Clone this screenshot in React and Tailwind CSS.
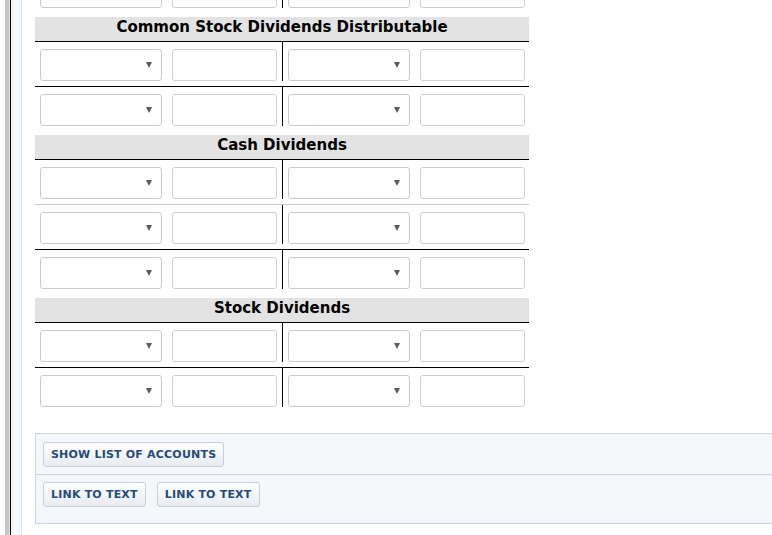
import React from 'react';

const font = { fontFamily: '"DejaVu Sans", Verdana, sans-serif' };

function Select() {
  return (
    <div className="relative w-[122px] h-[32px] bg-white border border-[#cbcbcb] rounded-[3px] shrink-0">
      <svg className="absolute right-[9px] top-[12px]" width="6" height="6" viewBox="0 0 6 6">
        <path d="M0 0 H6 L3 6 Z" fill="#5a5a5a" />
      </svg>
    </div>
  );
}

function Input() {
  return <div className="w-[105px] h-[32px] bg-white border border-[#cfcfcf] rounded-[3px] shrink-0" />;
}

// one journal line: two halves split by the black rule
function Row({ last, line = 'black' }) {
  const bottom = last
    ? 'pb-[9px]'
    : line === 'gray'
    ? 'pb-[5px] border-b border-[#c8c8c8]'
    : 'pb-[5px] border-b border-black';
  return (
    <div className={`flex ${bottom}`}>
      <div className="flex w-[248px] pt-[7px] pl-[5px] border-r border-black">
        <Select />
        <div className="w-[10px]" />
        <Input />
      </div>
      <div className="flex w-[246px] pt-[7px] pl-[5px]">
        <Select />
        <div className="w-[10px]" />
        <Input />
      </div>
    </div>
  );
}

function Header({ title }) {
  return (
    <div className="h-[25px] pt-[3px] bg-[#e3e3e3] border-b border-black text-center text-[15px] font-bold text-black leading-[15px]">
      {title}
    </div>
  );
}

function Button({ children }) {
  return (
    <button className="h-[25px] px-[7px] border border-[#c5ced9] rounded-[3px] bg-gradient-to-b from-white to-[#e7ecf1] text-[11px] font-bold uppercase tracking-[0.2px] text-[#264b77] leading-none">
      {children}
    </button>
  );
}

export default function App() {
  return (
    <div className="flex min-h-[535px] bg-white overflow-hidden" style={font}>
      {/* frame on the left */}
      <div className="w-[5px] shrink-0" />
      <div className="w-[4px] bg-[#c6c6c6] shrink-0" />
      <div className="w-[1px] bg-[#e4e4e4] shrink-0" />
      <div className="w-[1px] bg-black shrink-0" />
      <div className="w-[10px] bg-[#f5f8fb] shrink-0" />
      <div className="w-[1px] bg-[#d8e0e9] shrink-0" />

      <div className="flex-1 pl-[13px]">
        <div className="w-[494px] -mt-[31px]">
          <Row last />
          <Header title="Common Stock Dividends Distributable" />
          <Row />
          <Row last />
          <Header title="Cash Dividends" />
          <Row line="gray" />
          <Row />
          <Row last />
          <Header title="Stock Dividends" />
          <Row />
          <Row last />
        </div>

        <div className="mt-[17px] border-y border-l border-[#cdd3dc] bg-[#f4f7fa]">
          <div className="px-[7px] py-[7px] border-b border-[#cdd3dc]">
            <Button>Show List of Accounts</Button>
          </div>
          <div className="flex gap-[11px] px-[7px] pt-[7px] pb-[16px]">
            <Button>Link to Text</Button>
            <Button>Link to Text</Button>
          </div>
        </div>
      </div>
    </div>
  );
}
